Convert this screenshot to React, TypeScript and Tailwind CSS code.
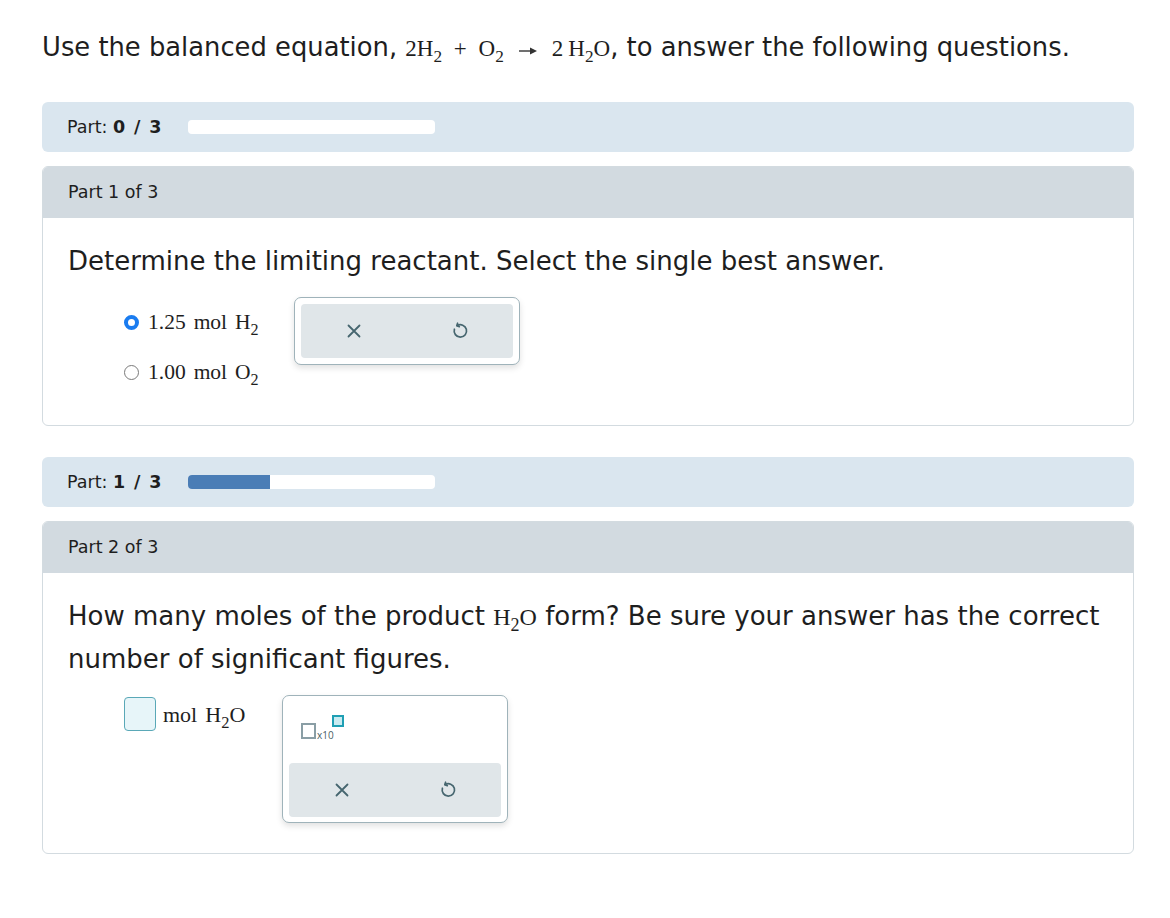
import React from "react";

const serif = { fontFamily: '"Liberation Serif", "Times New Roman", serif' };

function XIcon() {
  return (
    <svg width="16" height="16" viewBox="0 0 16 16" fill="none">
      <path d="M2.5 2.5 L13.5 13.5 M13.5 2.5 L2.5 13.5" stroke="#46666f" strokeWidth="1.8" strokeLinecap="round" />
    </svg>
  );
}

function UndoIcon() {
  return (
    <svg width="18" height="18" viewBox="0 0 18 18" fill="none">
      <path d="M6.2 3.6 A6.2 6.2 0 1 1 3.4 7.2" stroke="#46666f" strokeWidth="1.7" strokeLinecap="round" fill="none" />
      <path d="M6.6 1.2 L5.8 3.7 L8.3 4.6" stroke="#46666f" strokeWidth="1.7" strokeLinecap="round" strokeLinejoin="round" fill="none" />
    </svg>
  );
}

function ToolButtons() {
  return (
    <div className="flex h-[54px] rounded-[4px] bg-[#e0e6e9]">
      <div className="flex flex-1 items-center justify-center">
        <XIcon />
      </div>
      <div className="flex flex-1 items-center justify-center">
        <UndoIcon />
      </div>
    </div>
  );
}

function PartBar({ n }: { n: number }) {
  return (
    <div className="flex h-[50px] items-center rounded-[6px] bg-[#dae6ef] pl-[25px]">
      <div className="w-[121px] whitespace-nowrap text-[17.5px] text-[#1e1e1e]">
        Part: <span className="font-bold tracking-[1.4px]">{n} / 3</span>
      </div>
      <div className="h-[14px] w-[247px] overflow-hidden rounded-[4px] bg-white">
        <div className="h-full bg-[#4a7db6]" style={{ width: `${(n / 3) * 100}%` }} />
      </div>
    </div>
  );
}

function Sub({ children }: { children: React.ReactNode }) {
  return <span className="relative top-[6px] text-[0.75em] leading-none">{children}</span>;
}

export default function App() {
  return (
    <div
      className="min-h-[918px] w-[1170px] bg-white pl-[42px] pr-[36px] pt-[29px] text-[#1e1e1e]"
      style={{ fontFamily: '"DejaVu Sans", Verdana, sans-serif' }}
    >
      <div className="h-[36px] text-[25.8px] leading-[36px] whitespace-nowrap">
        Use the balanced equation,{" "}
        <span className="text-[23px]" style={serif}>
          2H<Sub>2</Sub> <span className="mx-[6px]">+</span> O<Sub>2</Sub>
          <span className="mx-[14px] inline-block align-middle">
            <svg width="20" height="10" viewBox="0 0 20 10">
              <path d="M1 5 H14" stroke="#333" strokeWidth="1.4" />
              <path d="M12 1.5 L19 5 L12 8.5 Z" fill="#333" />
            </svg>
          </span>
          2<span className="ml-[5px]">H</span>
          <Sub>2</Sub>O
        </span>
        , to answer the following questions.
      </div>

      <div className="mt-[37px]">
        <PartBar n={0} />
      </div>

      <div className="mt-[14px] overflow-hidden rounded-[6px] border border-[#d3dbe0]">
        <div className="flex h-[51px] items-center bg-[#d2dae0] pl-[25px] text-[17.5px]">Part 1 of 3</div>
        <div className="pb-[38px] pl-[25px] pt-[22px]">
          <div className="text-[26px] leading-[42px] whitespace-nowrap">
            Determine the limiting reactant. Select the single best answer.
          </div>
          <div className="mt-[15px] flex">
            <div className="w-[226px] pl-[56px] pt-[10px]">
              <div className="flex h-[30px] items-center">
                <span className="box-border h-[15px] w-[15px] shrink-0 rounded-full border-[4px] border-[#1a7cf0] bg-white" />
                <span className="ml-[9px] whitespace-nowrap text-[21.5px] leading-[30px]" style={serif}>
                  1.25<span className="ml-[8px]">mol</span>
                  <span className="ml-[8px]">H</span>
                  <Sub>2</Sub>
                </span>
              </div>
              <div className="mt-[20px] flex h-[30px] items-center">
                <span className="box-border h-[15px] w-[15px] shrink-0 rounded-full border-[1.5px] border-[#7a7a7a] bg-white" />
                <span className="ml-[9px] whitespace-nowrap text-[21.5px] leading-[30px]" style={serif}>
                  1.00<span className="ml-[8px]">mol</span>
                  <span className="ml-[8px]">O</span>
                  <Sub>2</Sub>
                </span>
              </div>
            </div>
            <div className="h-[68px] w-[226px] rounded-[7px] border border-[#9fb3ba] bg-white p-[6px] shadow-[0_3px_6px_rgba(0,0,0,0.12)]">
              <ToolButtons />
            </div>
          </div>
        </div>
      </div>

      <div className="mt-[31px]">
        <PartBar n={1} />
      </div>

      <div className="mt-[14px] overflow-hidden rounded-[6px] border border-[#d3dbe0]">
        <div className="flex h-[51px] items-center bg-[#d2dae0] pl-[25px] text-[17.5px]">Part 2 of 3</div>
        <div className="pb-[30px] pl-[25px] pt-[22px]">
          <div className="text-[26px] leading-[42px] whitespace-nowrap">
            How many moles of the product{" "}
            <span className="text-[24px]" style={serif}>
              H<Sub>2</Sub>O
            </span>{" "}
            form? Be sure your answer has the correct
            <br />
            number of significant figures.
          </div>
          <div className="mt-[15px] flex">
            <div className="flex w-[214px] items-start pl-[56px] pt-[2px]">
              <div className="h-[34px] w-[32px] shrink-0 rounded-[4px] border-[1.5px] border-[#5aa8b7] bg-[#e7f5f9]" />
              <span className="ml-[7px] whitespace-nowrap text-[22px] leading-[36px]" style={serif}>
                mol<span className="ml-[8px]">H</span>
                <Sub>2</Sub>O
              </span>
            </div>
            <div className="h-[128px] w-[226px] rounded-[7px] border border-[#9fb3ba] bg-white px-[6px] pb-[6px] shadow-[0_3px_6px_rgba(0,0,0,0.12)]">
              <div className="relative h-[67px]">
                <div className="absolute left-[12px] top-[27px] h-[16px] w-[15px] border-[2px] border-[#8a9ea5]" />
                <div
                  className="absolute left-[28px] top-[34px] text-[10px] leading-none text-[#4a5f66]"
                  style={{ fontFamily: '"Open Sans", "DejaVu Sans", sans-serif' }}
                >
                  x10
                </div>
                <div className="absolute left-[43px] top-[19px] h-[12px] w-[12px] border-[2px] border-[#1f9fb4] bg-[#c9ebf1]" />
              </div>
              <ToolButtons />
            </div>
          </div>
        </div>
      </div>
    </div>
  );
}
